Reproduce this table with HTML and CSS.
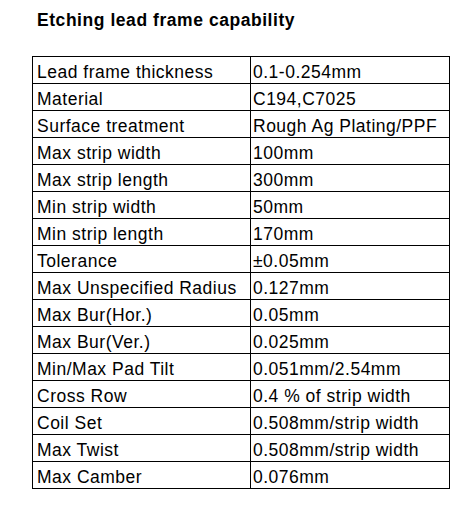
FILE: index.html
```html
<!DOCTYPE html>
<html>
<head>
<meta charset="utf-8">
<link rel="stylesheet" href="styles.css">
</head>
<body>
<div class="title">Etching lead frame capability</div>
<table class="spec">
<colgroup><col class="c1"><col class="c2"></colgroup>
<tr><td>Lead frame thickness</td><td>0.1-0.254mm</td></tr>
<tr><td>Material</td><td>C194,C7025</td></tr>
<tr><td>Surface treatment</td><td>Rough Ag Plating/PPF</td></tr>
<tr><td>Max strip width</td><td>100mm</td></tr>
<tr><td>Max strip length</td><td>300mm</td></tr>
<tr><td>Min strip width</td><td>50mm</td></tr>
<tr><td>Min strip length</td><td>170mm</td></tr>
<tr><td>Tolerance</td><td>±0.05mm</td></tr>
<tr><td>Max Unspecified Radius</td><td>0.127mm</td></tr>
<tr><td>Max Bur(Hor.)</td><td>0.05mm</td></tr>
<tr><td>Max Bur(Ver.)</td><td>0.025mm</td></tr>
<tr><td>Min/Max Pad Tilt</td><td>0.051mm/2.54mm</td></tr>
<tr><td>Cross Row</td><td>0.4 % of strip width</td></tr>
<tr><td>Coil Set</td><td>0.508mm/strip width</td></tr>
<tr><td>Max Twist</td><td>0.508mm/strip width</td></tr>
<tr><td>Max Camber</td><td>0.076mm</td></tr>
</table>
</body>
</html>
```
FILE: styles.css
```css
html, body {
  margin: 0;
  padding: 0;
  background: #ffffff;
}
body {
  font-family: "Liberation Sans", Arial, sans-serif;
  color: #000000;
}
.title {
  padding: 10px 0 0 37px;
  font-size: 17.5px;
  font-weight: bold;
  line-height: 20px;
  letter-spacing: 0.55px;
}
.spec {
  margin: 26px 0 0 32px;
  border-collapse: collapse;
  table-layout: fixed;
  width: 417px;
}
.c1 { width: 218px; }
.c2 { width: 199px; }
.spec td {
  border: 1px solid #000000;
  padding: 4px 0 0 4px;
  height: 22px;
  line-height: 22px;
  font-size: 17.5px;
  letter-spacing: 0.5px;
  white-space: nowrap;
  overflow: hidden;
  vertical-align: top;
}
.spec td + td {
  padding-left: 2px;
}
```
